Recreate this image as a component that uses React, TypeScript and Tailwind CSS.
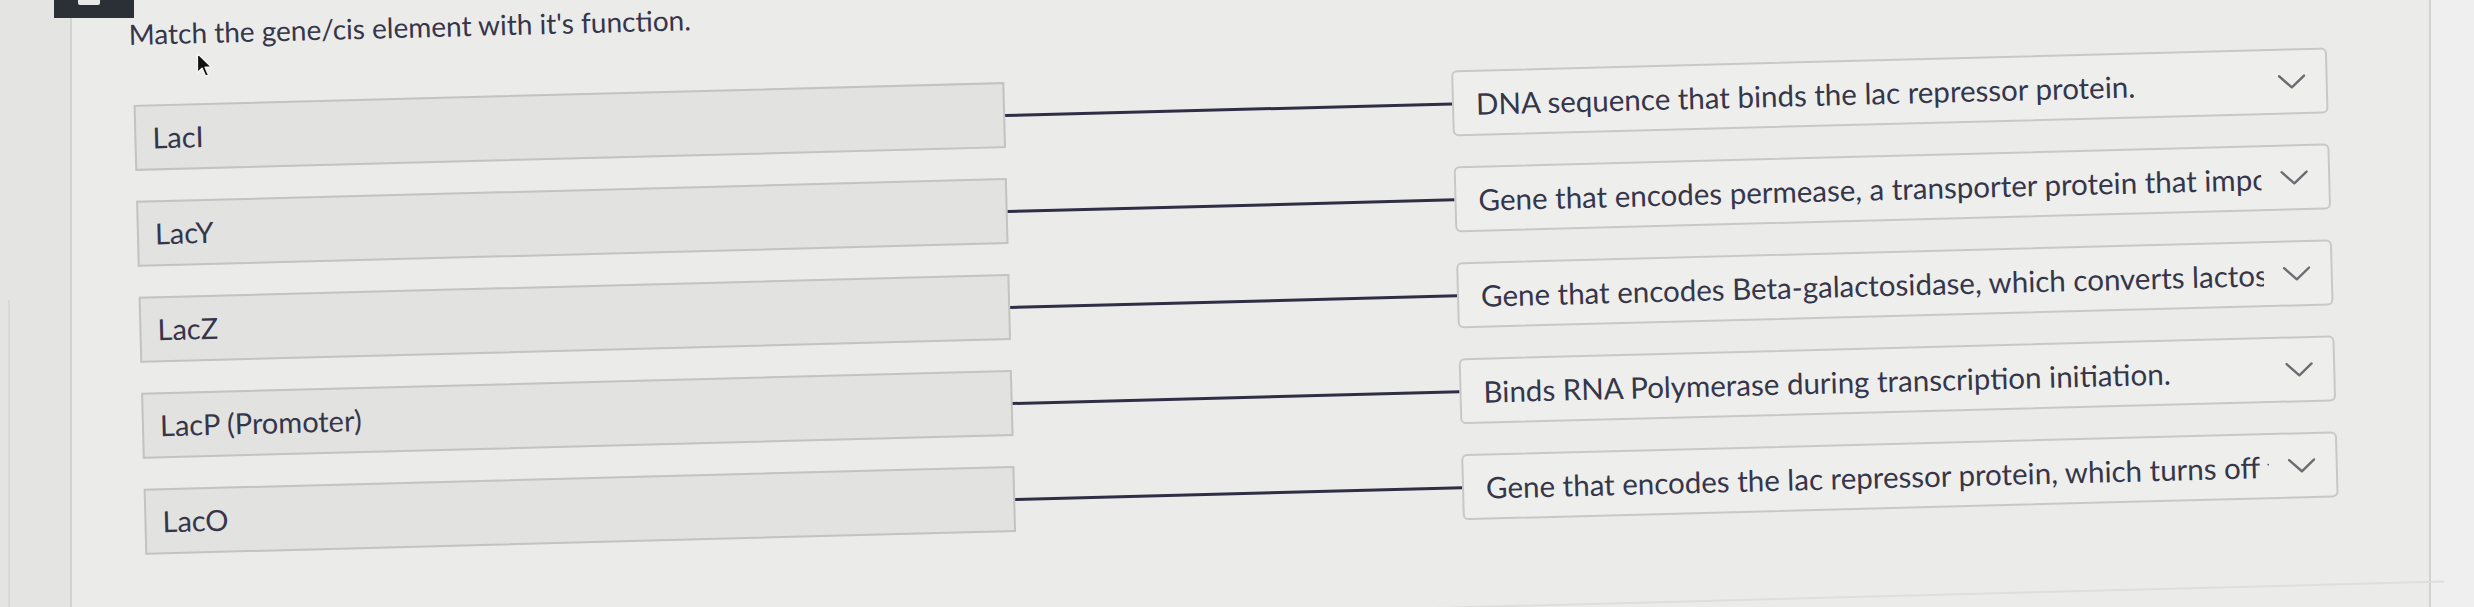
const rows = [
  {
    gene: 'LacI',
    fn: 'DNA sequence that binds the lac repressor protein.',
  },
  {
    gene: 'LacY',
    fn: 'Gene that encodes permease, a transporter protein that imports lactose into the cell.',
  },
  {
    gene: 'LacZ',
    fn: 'Gene that encodes Beta-galactosidase, which converts lactose into glucose and galactose.',
  },
  {
    gene: 'LacP (Promoter)',
    fn: 'Binds RNA Polymerase during transcription initiation.',
  },
  {
    gene: 'LacO',
    fn: 'Gene that encodes the lac repressor protein, which turns off transcription of the operon.',
  },
]

function Cursor() {
  return (
    <svg width="17" height="26" viewBox="0 0 13 20" className="absolute left-[124px] top-[52px]">
      <path d="M1 1 L1 16 L4.6 12.6 L7.2 18.6 L9.6 17.6 L7 11.7 L12 11.7 Z" fill="#111" stroke="#f4f4f4" strokeWidth="1.2" strokeLinejoin="round" />
    </svg>
  )
}

function Chevron() {
  return (
    <svg width="28" height="15" viewBox="0 0 28 15" className="ml-[19px] shrink-0">
      <polyline points="1.5,1.5 14,13 26.5,1.5" fill="none" stroke="#6c6c73" strokeWidth="2.4" strokeLinecap="round" strokeLinejoin="round" />
    </svg>
  )
}

export default function App() {
  return (
    <div className="relative flex h-[607px] w-[2474px] overflow-hidden bg-[#ebebe9] font-['Lato','Open_Sans',sans-serif] text-[#36364b]">
      {/* left frame strip */}
      <div className="relative w-[72px] shrink-0 border-r-2 border-[#d3d3d1] bg-[#e4e4e2]">
        <div className="absolute left-[8px] top-[300px] h-[307px] w-[2px] bg-[#d8d8d6]" />
      </div>

      {/* question panel */}
      <div className="relative flex-1">
        <div className="origin-[57px_45px] rotate-[-1.5deg] pl-[57px] pt-[18px]">
          <h1 className="text-[28px] leading-[33px]">Match the gene/cis element with it's function.</h1>

          <div className="mt-[54px] flex flex-col gap-[30px]">
            {rows.map(r => (
              <div key={r.gene} className="flex h-[66px] items-center">
                <div className="ml-[3px] flex h-[66px] w-[871px] shrink-0 items-center border-2 border-[#c3c3c1] bg-[#e2e2e0] pl-[16px] text-[29px]">
                  {r.gene}
                </div>
                <div className="h-[3px] w-[447px] shrink-0 bg-[#2e2e45]" />
                <div className="flex h-[66px] w-[876px] shrink-0 items-center rounded-[6px] border-2 border-[#c8c8c6] bg-[#eeeeec] pl-[22px] pr-[20px]">
                  <span className="w-[784px] overflow-hidden whitespace-nowrap pt-[3px] text-[29.5px]">{r.fn}</span>
                  <Chevron />
                </div>
              </div>
            ))}
          </div>

          <div className="mt-[86px] h-[2px] w-[2300px] bg-[#dededc]" />
        </div>
        <Cursor />
      </div>

      {/* right frame strip */}
      <div className="w-[82px] shrink-0 border-l-2 border-[#d2d2d2] bg-[#efefef]" />
      <div className="w-[19px] shrink-0 border-l-2 border-[#3a4a7a] bg-[#1c2026]" />

      {/* dark tab at top-left */}
      <div className="absolute left-[54px] top-0 h-[18px] w-[80px] bg-[#2b3036]">
        <div className="ml-[24px] h-[5px] w-[22px] rounded-b-[2px] bg-[#e8e8e8]" />
      </div>
    </div>
  )
}
